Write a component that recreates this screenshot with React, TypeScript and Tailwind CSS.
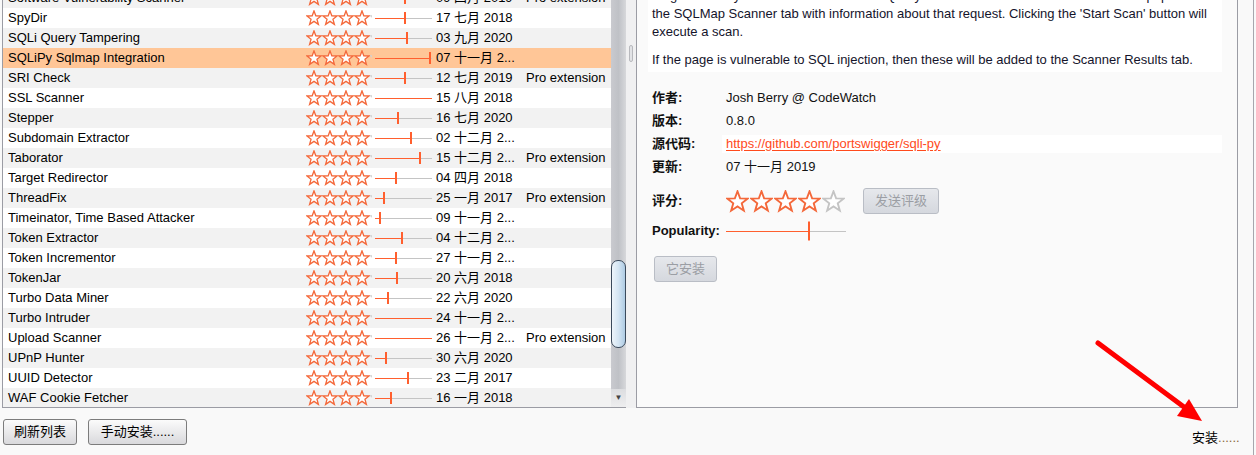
import type { ReactNode } from 'react';

type Row = {
  name: string;
  date: string;
  pro?: boolean;
  pop: number;
};

const rows: Row[] = [
  { name: 'Software Vulnerability Scanner', date: '09 四月 2019', pro: true, pop: 30 },
  { name: 'SpyDir', date: '17 七月 2018', pop: 30 },
  { name: 'SQLi Query Tampering', date: '03 九月 2020', pop: 32 },
  { name: 'SQLiPy Sqlmap Integration', date: '07 十一月 2...', pop: 55 },
  { name: 'SRI Check', date: '12 七月 2019', pro: true, pop: 30 },
  { name: 'SSL Scanner', date: '15 八月 2018', pop: 70 },
  { name: 'Stepper', date: '16 七月 2020', pop: 23 },
  { name: 'Subdomain Extractor', date: '02 十二月 2...', pop: 36 },
  { name: 'Taborator', date: '15 十二月 2...', pro: true, pop: 45 },
  { name: 'Target Redirector', date: '04 四月 2018', pop: 21 },
  { name: 'ThreadFix', date: '25 一月 2017', pro: true, pop: 9 },
  { name: 'Timeinator, Time Based Attacker', date: '09 十一月 2...', pop: 5 },
  { name: 'Token Extractor', date: '04 十二月 2...', pop: 27 },
  { name: 'Token Incrementor', date: '27 十一月 2...', pop: 21 },
  { name: 'TokenJar', date: '20 六月 2018', pop: 22 },
  { name: 'Turbo Data Miner', date: '22 六月 2020', pop: 13 },
  { name: 'Turbo Intruder', date: '24 十一月 2...', pop: 70 },
  { name: 'Upload Scanner', date: '26 十一月 2...', pro: true, pop: 70 },
  { name: 'UPnP Hunter', date: '30 六月 2020', pop: 11 },
  { name: 'UUID Detector', date: '23 二月 2017', pop: 33 },
  { name: 'WAF Cookie Fetcher', date: '16 一月 2018', pop: 16 },
];

const SELECTED = 3;

const FONT =
  "font-['Liberation_Sans','Noto_Sans_CJK_SC',Arial,sans-serif]";

function Star({ size, color }: { size: number; color: string }) {
  return (
    <svg
      width={size}
      height={size}
      viewBox="0 0 16 16"
      className="shrink-0"
    >
      <polygon
        points="8,0.9 9.82,5.79 15.13,5.98 10.95,9.26 12.41,14.37 8,11.4 3.59,14.37 5.05,9.26 0.87,5.98 6.18,5.79"
        fill="#ffffff"
        stroke={color}
        strokeWidth={1.3}
        strokeLinejoin="miter"
      />
    </svg>
  );
}

function Slider({
  width,
  value,
  knobHeight,
  knobWidth,
}: {
  width: number;
  value: number;
  knobHeight: number;
  knobWidth: number;
}) {
  return (
    <div className="relative h-full" style={{ width }}>
      <div className="absolute left-0 right-0 top-1/2 h-px bg-[#c4c4c4]" />
      <div
        className="absolute left-0 top-1/2 h-px bg-[#ff5f2e]"
        style={{ width: Math.min(value, width) }}
      />
      {value < width && (
        <div
          className="absolute top-1/2 -translate-y-1/2 bg-[#ff5f2e]"
          style={{ left: value - 1, height: knobHeight, width: knobWidth }}
        />
      )}
    </div>
  );
}

function ListRow({ row, index }: { row: Row; index: number }) {
  const bg =
    index === SELECTED
      ? 'bg-[#ffc697]'
      : index % 2 === 0
        ? 'bg-[#f2f2f2]'
        : 'bg-white';
  return (
    <div className={`flex h-[20px] items-center text-[13px] text-black ${bg}`}>
      <div className="w-[303px] truncate pl-[5px]">{row.name}</div>
      <div className="flex w-[66px] overflow-hidden">
        {[0, 1, 2, 3].map((i) => (
          <Star key={i} size={16} color="#f4683a" />
        ))}
        <Star size={16} color="#cfcfcf" />
      </div>
      <div className="h-[20px] w-[62px] pl-[3px]">
        <Slider width={57} value={row.pop} knobHeight={12} knobWidth={2} />
      </div>
      <div className="w-[90px] whitespace-nowrap pl-[2px]">{row.date}</div>
      <div className="whitespace-nowrap pl-[2px]">
        {row.pro ? 'Pro extension' : ''}
      </div>
    </div>
  );
}

function Scrollbar() {
  return (
    <div className="flex w-[15px] flex-col bg-gradient-to-r from-[#c9cacf] via-[#bfc1c6] to-[#d7d8db]">
      <div className="h-[260px]" />
      <div className="h-[88px] rounded-[7px] border border-[#3b4a5c] bg-gradient-to-r from-[#eef5fb] via-[#d4e5f3] to-[#aecbe3]" />
      <div className="flex-1" />
      <div className="flex h-[18px] items-center justify-center bg-gradient-to-b from-[#dcdde0] to-[#eeeeef] text-[8px] text-[#444]">
        ▼
      </div>
    </div>
  );
}

function Button({
  children,
  disabled,
  className,
}: {
  children: ReactNode;
  disabled?: boolean;
  className?: string;
}) {
  return (
    <button
      type="button"
      className={`flex h-[26px] items-center justify-center rounded-[3px] border text-[13px] ${
        disabled
          ? 'border-[#b9bdc5] bg-gradient-to-b from-[#e6e8ec] to-[#d5d8de] text-[#9b9ea4]'
          : 'border-[#7c7c7c] bg-gradient-to-b from-[#fbfbfb] to-[#d9d9dc] text-black'
      } ${className ?? ''}`}
    >
      {children}
    </button>
  );
}

function Detail({
  label,
  children,
  highlight,
}: {
  label: string;
  children: ReactNode;
  highlight?: boolean;
}) {
  return (
    <div className="flex h-[23px] items-center">
      <div className="w-[74px] pl-[4px] text-[13px] font-bold">{label}</div>
      <div
        className={`flex h-[18px] flex-1 items-center pl-[4px] text-[13px] ${
          highlight ? 'bg-white' : ''
        }`}
      >
        {children}
      </div>
    </div>
  );
}

function DetailPanel() {
  return (
    <div className="flex w-[602px] flex-col overflow-hidden border-x border-b border-[#9b9ca4] bg-[#fafafa] text-[#111]">
      <div className="ml-[11px] mr-[15px] mt-[-15px] bg-white pb-[3px] pl-[4px] pt-[2px] text-[13px] leading-[18px] text-[#14142b]">
        <p className="whitespace-nowrap">
          Target or Proxy main tabs and choose 'SQLiPy Scan' from the context
          menu. This will populate
          <br />
          the SQLMap Scanner tab with information about that request. Clicking
          the 'Start Scan' button will
          <br />
          execute a scan.
        </p>
        <p className="mt-[10px] whitespace-nowrap">
          If the page is vulnerable to SQL injection, then these will be added
          to the Scanner Results tab.
        </p>
      </div>

      <div className="ml-[11px] mr-[15px] mt-[14px]">
        <Detail label="作者:">Josh Berry @ CodeWatch</Detail>
        <Detail label="版本:">0.8.0</Detail>
        <Detail label="源代码:" highlight>
          <span className="text-[#ff4a1c] underline underline-offset-2">
            https://github.com/portswigger/sqli-py
          </span>
        </Detail>
        <Detail label="更新:">07 十一月 2019</Detail>

        <div className="mt-[10px] flex h-[26px] items-center">
          <div className="w-[78px] pl-[4px] text-[13px] font-bold">评分:</div>
          <div className="flex w-[137px] gap-[1px]">
            {[0, 1, 2, 3].map((i) => (
              <Star key={i} size={23} color="#f4683a" />
            ))}
            <Star size={23} color="#c4c4c4" />
          </div>
          <Button disabled className="w-[76px]">
            发送评级
          </Button>
        </div>

        <div className="mt-[7px] flex h-[20px] items-center">
          <div className="w-[78px] pl-[4px] text-[13px] font-bold">
            Popularity:
          </div>
          <div className="h-[20px]">
            <Slider width={120} value={83} knobHeight={19} knobWidth={2} />
          </div>
        </div>

        <div className="mt-[15px] pl-[6px]">
          <Button disabled className="w-[63px]">
            它安装
          </Button>
        </div>
      </div>
    </div>
  );
}

export default function App() {
  return (
    <div
      className={`relative h-[455px] w-[1256px] overflow-hidden bg-[#f9f9f9] ${FONT}`}
    >
      <div className="flex h-[408px]">
        <div className="ml-[2px] flex border-b border-l border-[#9b9ca4]">
          <div className="w-[608px] overflow-hidden bg-white">
            <div className="mt-[-12px]">
              {rows.map((row, i) => (
                <ListRow key={row.name} row={row} index={i} />
              ))}
            </div>
          </div>
          <Scrollbar />
        </div>

        <div className="relative w-[10px] bg-[#f0f0f1]">
          <div className="absolute left-[3px] top-[45px] h-[17px] w-[4px] rounded-[2px] border border-[#b8b9bd] bg-[#e2e3e6]" />
        </div>

        <DetailPanel />

        <div className="ml-[15px] h-[455px] w-px bg-[#a6a7ad]" />
      </div>

      <div className="flex gap-[11px] pl-[3px] pt-[11px]">
        <Button className="w-[74px]">刷新列表</Button>
        <Button className="w-[99px]">手动安装......</Button>
      </div>

      <div className="absolute left-[1192px] top-[428px] text-[13px] text-black">
        安装<span className="text-[#8a6a3a]">......</span>
      </div>

      <svg
        className="pointer-events-none absolute left-0 top-0"
        width={1256}
        height={455}
      >
        <line
          x1={1098}
          y1={343}
          x2={1188}
          y2={410}
          stroke="#ff0000"
          strokeWidth={5}
          strokeLinecap="round"
        />
        <polygon points="1202,421 1177,416 1189,399" fill="#ff0000" />
      </svg>
    </div>
  );
}
